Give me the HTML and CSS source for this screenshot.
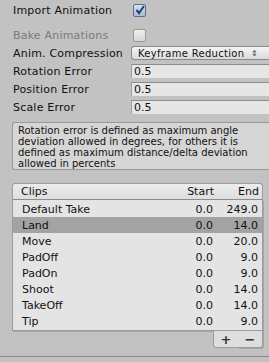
FILE: index.html
```html
<!DOCTYPE html>
<html>
<head>
<meta charset="utf-8">
<title>Animations</title>
<link rel="stylesheet" href="styles.css">
</head>
<body>

<div class="inspector">

  <div class="row first">
    <span class="label">Import Animation</span>
    <span class="check on"><svg width="10" height="10" viewBox="0 0 10 10"><path d="M1.5 5 L4 8 L9 1" fill="none" stroke="#1f3f7a" stroke-width="2"/></svg></span>
  </div>

  <div class="row gap">
    <span class="label dim">Bake Animations</span>
    <span class="check off"></span>
  </div>

  <div class="row">
    <span class="label">Anim. Compression</span>
    <span class="popup">Keyframe Reduction<span class="arrows">&#8661;</span></span>
  </div>

  <div class="row">
    <span class="label">Rotation Error</span>
    <span class="field">0.5</span>
  </div>
  <div class="row">
    <span class="label">Position Error</span>
    <span class="field">0.5</span>
  </div>
  <div class="row">
    <span class="label">Scale Error</span>
    <span class="field">0.5</span>
  </div>

  <div class="help">
    Rotation error is defined as maximum angle deviation allowed in degrees, for others it is defined as maximum distance/delta deviation allowed in percents
  </div>

  <div class="clips">
    <div class="clip head">
      <span class="name">Clips</span><span class="num">Start</span><span class="num">End</span>
    </div>
    <div class="body">
      <div class="clip"><span class="name">Default Take</span><span class="num">0.0</span><span class="num">249.0</span></div>
      <div class="clip sel"><span class="name">Land</span><span class="num">0.0</span><span class="num">14.0</span></div>
      <div class="clip"><span class="name">Move</span><span class="num">0.0</span><span class="num">20.0</span></div>
      <div class="clip"><span class="name">PadOff</span><span class="num">0.0</span><span class="num">9.0</span></div>
      <div class="clip"><span class="name">PadOn</span><span class="num">0.0</span><span class="num">9.0</span></div>
      <div class="clip"><span class="name">Shoot</span><span class="num">0.0</span><span class="num">14.0</span></div>
      <div class="clip"><span class="name">TakeOff</span><span class="num">0.0</span><span class="num">14.0</span></div>
      <div class="clip"><span class="name">Tip</span><span class="num">0.0</span><span class="num">9.0</span></div>
    </div>
    <div class="footer">
      <span class="btn">+</span><span class="btn">&minus;</span>
    </div>
  </div>

</div>

<div class="bottom"></div>

</body>
</html>
```

FILE: styles.css
```css
body { margin: 0; background: #c2c2c2; font-family: "DejaVu Sans", sans-serif; font-size: 11px; color: #111; width: 269px; height: 362px; overflow: hidden; }

.inspector { padding: 1px 0 0 13px; }

.row { display: flex; align-items: center; height: 18px; }
.row.gap { margin-top: 7px; }
.label { width: 118px; flex: none; white-space: nowrap; letter-spacing: 0.2px; }
.label.dim { color: #7a7a7a; }

.check { width: 11px; height: 11px; border: 1px solid #6c6c6c; border-radius: 2px; display: flex; align-items: center; justify-content: center; margin-left: 2px; }
.check.on { background: linear-gradient(#d9e2ee, #a9bad2); border-color: #5a6f92; }
.check.off { background: linear-gradient(#eeeeee, #d6d6d6); border-color: #9a9a9a; }

.popup { flex: 1; height: 14px; display: flex; align-items: center; padding-left: 6px; background: linear-gradient(#f4f4f4, #dadada); border: 1px solid #8a8a8a; border-right: none; border-radius: 3px 0 0 3px; box-sizing: border-box; font-size: 10px; letter-spacing: 0.3px; }
.popup .arrows { margin-left: auto; margin-right: 11px; font-size: 8px; color: #333; }

.field { flex: 1; height: 14px; line-height: 13px; padding-left: 2px; background: #e6e6e6; border-top: 1px solid #8c8c8c; border-left: 1px solid #a0a0a0; box-sizing: border-box; }

.help { margin: 6px 0 0 -1px; padding: 2px 4px 3px 5px; background: #d6d6d6; border: 1px solid #9a9a9a; border-right: none; border-radius: 3px 0 0 3px; font-size: 10px; line-height: 11px; height: 48px; box-sizing: border-box; }

.clips { margin: 13px 6px 0 -1px; }
.clip { display: flex; height: 16px; align-items: center; padding: 0 3px 0 8px; }
.clip .name { flex: 1; }
.clip .num { text-align: right; }
.clip .num:nth-child(2) { width: 40px; }
.clip .num:nth-child(3) { width: 45px; }

.head { background: linear-gradient(#ececec, #dedede); border: 1px solid #9c9c9c; border-bottom-color: #8c8c8c; border-radius: 3px 3px 0 0; height: 15px; }
.body { background: #e4e4e4; border: 1px solid #9c9c9c; border-top: none; padding: 1px 0 1px; box-shadow: 1px 1px 0 #a6a6a6; }
.body .clip { padding-left: 9px; padding-right: 4px; }
.clip.sel { background: #a3a3a3; }

.footer { display: flex; justify-content: flex-end; }
.btn { width: 24px; height: 16px; display: flex; align-items: center; justify-content: center; background: #dedede; font-weight: bold; font-size: 13px; color: #333; }
.footer .btn:first-child { border-left: 1px solid #9c9c9c; border-bottom: 1px solid #9c9c9c; border-radius: 0 0 0 3px; }
.footer .btn:last-child { border-right: 1px solid #9c9c9c; border-bottom: 1px solid #9c9c9c; border-radius: 0 0 3px 0; box-shadow: 1px 1px 0 #a6a6a6; }

.bottom { position: absolute; left: 0; right: 0; top: 356px; border-top: 1px solid #8a8a8a; }
```
